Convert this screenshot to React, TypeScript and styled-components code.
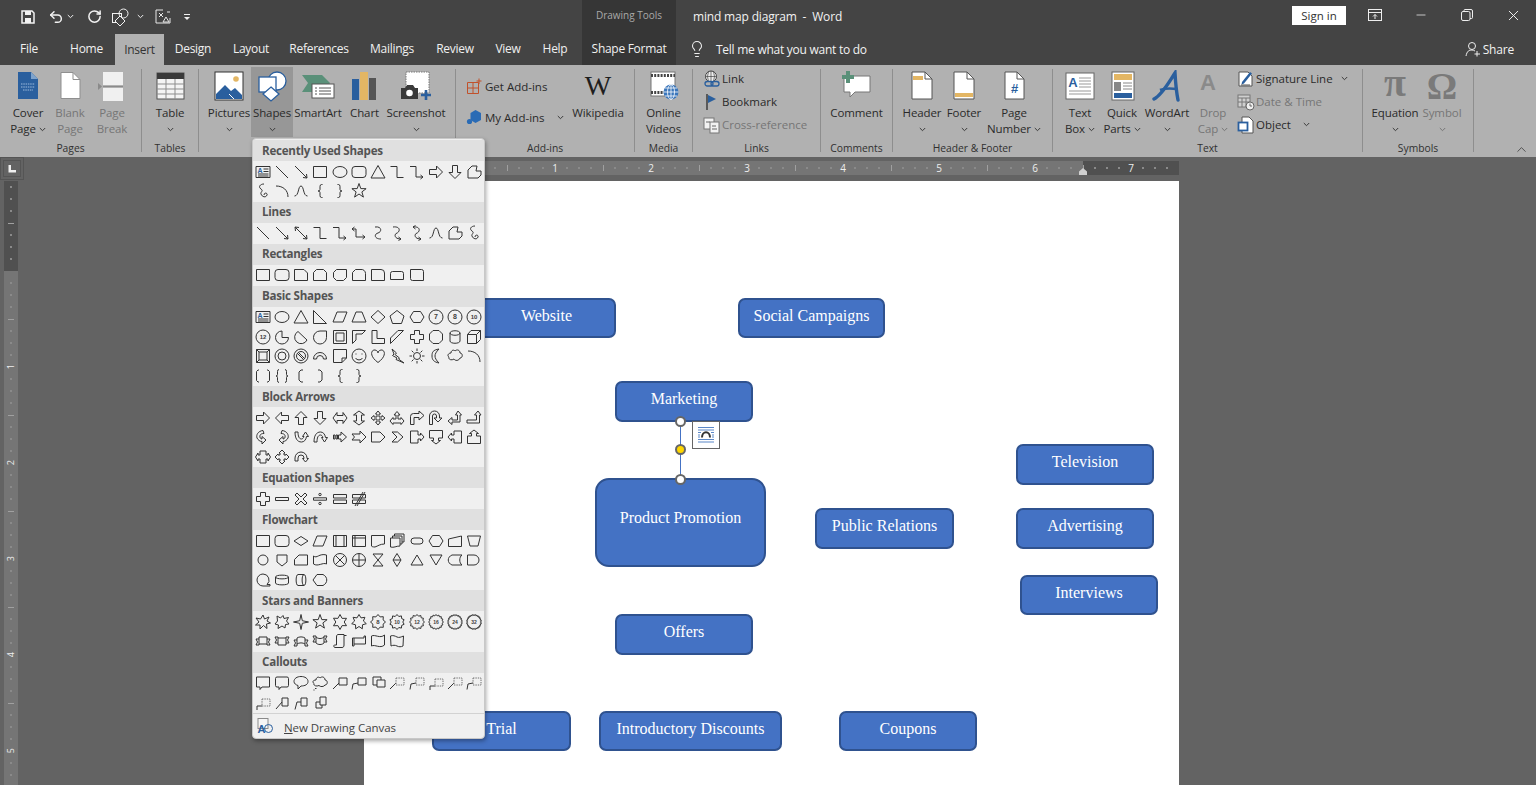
import React from 'react';
import styled, { createGlobalStyle } from 'styled-components';
import { ChevronUp, Lightbulb, Minus, RotateCw, Undo2, X } from 'lucide-react';

const UI = `"Open Sans", "Liberation Sans", sans-serif`;
const SERIF = `"Liberation Serif", serif`;

const Global = createGlobalStyle`
  html, body { margin: 0; padding: 0; background: #636363; overflow: hidden; }
  * { box-sizing: border-box; }
`;

const Root = styled.div`
  position: relative; width: 1536px; height: 785px; overflow: hidden;
  font-family: ${UI}; font-size: 11.5px; color: #262626; background: #636363;
`;

/* ---------- title bar ---------- */
const Header = styled.header`display: flex; height: 65px; background: #444444; color: #f2f2f2;`;
const HeaderLeft = styled.div`width: 582px; display: flex; flex-direction: column;`;
const Qat = styled.div`height: 33px; display: flex; align-items: center; padding-left: 20px;`;
const QatSlot = styled.span<{ $w: number }>`width: ${p => p.$w}px; display: flex; justify-content: center; align-items: center; flex: none;`;
const Tabs = styled.nav`height: 32px; display: flex; align-items: flex-end;`;
const Tab = styled.div<{ $w: number; $active?: boolean }>`
  width: ${p => p.$w}px; height: ${p => (p.$active ? 31 : 32)}px; display: flex; align-items: center; justify-content: center;
  font-size: 12px; letter-spacing: -0.28px; padding-bottom: ${p => (p.$active ? 0 : 1)}px;
  color: ${p => (p.$active ? '#333' : '#f0f0f0')};
  background: ${p => (p.$active ? '#b1b1b1' : 'transparent')};
`;
const Context = styled.div`width: 94px; background: #363636; display: flex; flex-direction: column;`;
const ContextTitle = styled.div`height: 33px; display: flex; align-items: center; justify-content: center; font-size: 10px; color: #a9a9a9; padding-bottom: 3px;`;
const HeaderRight = styled.div`flex: 1; display: flex; flex-direction: column;`;
const TopRow = styled.div`height: 33px; display: flex; align-items: center; padding-left: 17px;`;
const DocTitle = styled.div`font-size: 12px; color: #f2f2f2; white-space: pre; padding-bottom: 1px; letter-spacing: -0.17px;`;
const SignIn = styled.div`
  margin-left: auto; margin-right: 6px; margin-bottom: 3px; width: 54px; height: 19px; background: #fff; color: #333; font-size: 11.5px;
  display: flex; align-items: center; justify-content: center;
`;
const WinBtn = styled.div`width: 46px; height: 30px; margin-bottom: 3px; display: flex; align-items: center; justify-content: center;`;
const BottomRow = styled.div`height: 32px; display: flex; align-items: center; padding-left: 12px; padding-right: 22px;`;
const TellMe = styled.div`font-size: 12px; margin-left: 10px; letter-spacing: -0.26px; color: #f2f2f2;`;
const Share = styled.div`margin-left: auto; display: flex; align-items: center; gap: 2px; font-size: 12px; letter-spacing: -0.2px;`;

/* ---------- ribbon ---------- */
const Ribbon = styled.div`display: flex; height: 92px; background: #b1b1b1;`;
const Group = styled.section<{ $w: number }>`
  width: ${p => p.$w}px; flex: none; display: flex; flex-direction: column; padding-top: 2px;
`;
const GroupBody = styled.div<{ $pl?: number; $center?: boolean }>`
  height: 73px; display: flex; padding-left: ${p => p.$pl ?? 0}px;
  justify-content: ${p => (p.$center ? 'center' : 'flex-start')};
`;
const GroupLabel = styled.div`height: 16px; line-height: 16px; text-align: center; font-size: 10.3px; color: #303030; white-space: nowrap;`;
const Sep = styled.div`width: 1px; flex: none; margin: 4px 0 5px; background: #8e8e8e;`;
const Big = styled.div<{ $w: number; $hot?: boolean; $off?: boolean }>`
  width: ${p => p.$w}px; height: 70px; flex: none; display: flex; flex-direction: column; align-items: center;
  background: ${p => (p.$hot ? '#979797' : 'transparent')};
  color: ${p => (p.$off ? '#767676' : '#2a2a2a')};
`;
const BigIcon = styled.div`height: 38px; width: 100%; display: flex; align-items: center; justify-content: center; flex: none;`;
const BigLine = styled.div`height: 16px; line-height: 16px; white-space: nowrap; display: flex; align-items: center; gap: 3px; letter-spacing: -0.1px;`;
const Column = styled.div<{ $w: number; $top: number; $h: number }>`
  width: ${p => p.$w}px; padding-top: ${p => p.$top}px; display: flex; flex-direction: column; flex: none;
  & > div { height: ${p => p.$h}px; }
`;
const Small = styled.div<{ $off?: boolean }>`
  display: flex; align-items: center; white-space: nowrap; letter-spacing: 0;
  color: ${p => (p.$off ? '#767676' : '#2a2a2a')};
`;
const SmallIcon = styled.span`width: 19px; flex: none; display: flex; justify-content: center; margin-right: 1px;`;
const Spacer = styled.span<{ $w: number }>`display: inline-block; width: ${p => p.$w}px; flex: none;`;
const Collapse = styled.div`flex: 1; display: flex; align-items: flex-end; justify-content: flex-end; padding: 0 7px 0 0;`;
const BigGlyph = styled.span<{ $size: number; $color: string; $bold?: boolean; $lift?: number }>`
  font-family: ${SERIF}; font-size: ${p => p.$size}px; line-height: 1; color: ${p => p.$color};
  font-weight: ${p => (p.$bold ? 'bold' : 'normal')}; margin-bottom: ${p => p.$lift ?? 0}px;
`;

/* ---------- workspace ---------- */
const Workspace = styled.main`display: flex; height: 628px; background: #636363;`;
const LeftPane = styled.div`width: 364px; flex: none; display: flex; flex-direction: column;`;
const TabSelector = styled.div`
  width: 24px; height: 23px; border: 1px solid #555; padding: 2px; flex: none; margin-bottom: 1px;
  & > div { width: 100%; height: 100%; border: 1px solid #555; display: flex; align-items: center; justify-content: center; }
`;
const VRuler = styled.div`
  width: 14px; margin-left: 4px; flex: 1; overflow: hidden;
  background: linear-gradient(to bottom, #505050 90px, #757575 90px);
`;
const VCell = styled.div`height: 12px; display: flex; align-items: center; justify-content: center;`;
const VNum = styled.span`font-size: 9px; line-height: 10px; color: #eee; writing-mode: vertical-rl; transform: rotate(180deg);`;
const Dot = styled.i`display: block; width: 2px; height: 2px; background: #8a8a8a;`;
const VDash = styled.i`display: block; width: 6px; height: 1px; background: #a0a0a0;`;
const HDash = styled.i`display: block; width: 1px; height: 6px; background: #a0a0a0;`;
const PageCol = styled.div`width: 815px; flex: none; display: flex; flex-direction: column; padding-top: 4px;`;
const HRuler = styled.div`
  position: relative; height: 14px; flex: none; display: flex; padding-left: 5px;
  background: linear-gradient(to right, #505050 95px, #757575 95px, #757575 719px, #505050 719px);
`;
const HCell = styled.div`width: 12px; flex: none; display: flex; align-items: center; justify-content: center;`;
const HNum = styled.span`font-size: 10px; line-height: 14px; color: #eee;`;
const IndentMark = styled.div`
  position: absolute; left: 715px; bottom: 0; width: 8px; height: 7px; background: #d0d0d0;
  clip-path: polygon(50% 0, 100% 50%, 100% 100%, 0 100%, 0 50%);
`;
const Page = styled.div`position: relative; margin-top: 6px; flex: 1; background: #fff;`;
const Node = styled.div<{ $x: number; $y: number; $w: number; $h: number; $r?: number; $pb?: number }>`
  position: absolute; left: ${p => p.$x - 365}px; top: ${p => p.$y - 181}px; width: ${p => p.$w + 1}px; height: ${p => p.$h}px;
  background: #4472c4; border: 2px solid #2f528f; border-radius: ${p => p.$r ?? 7}px; color: #fff;
  font-family: ${SERIF}; font-size: 16px; display: flex; align-items: center; justify-content: center;
  padding-bottom: ${p => p.$pb ?? 5}px; white-space: nowrap;
`;
const Connector = styled.div`position: absolute; left: 316px; top: 240px; width: 1px; height: 58px; background: #4472c4;`;
const Handle = styled.div<{ $y: number; $yellow?: boolean }>`
  position: absolute; left: 311px; top: ${p => p.$y - 5}px; width: 11px; height: 11px; border-radius: 50%;
  border: 2px solid #666; background: ${p => (p.$yellow ? '#ffd700' : '#fff')};
`;
const LayoutBtn = styled.div`
  position: absolute; left: 328px; top: 240px; width: 28px; height: 28px; background: #fff; border: 1px solid #666;
  display: flex; align-items: center; justify-content: center;
`;

/* ---------- shapes gallery ---------- */
const Menu = styled.div`
  position: absolute; left: 252px; top: 138px; width: 233px; height: 601px; background: #f0f0f0;
  border: 1px solid #c8c8c8; border-radius: 4px; padding-top: 1px; box-shadow: 1px 2px 4px rgba(0,0,0,.35); overflow: hidden;
`;
const MenuHead = styled.div`
  height: 21px; background: #e0e0e0; padding: 0 0 1px 9px; display: flex; align-items: center;
  font-size: 11.6px; font-weight: 700; color: #545454; white-space: nowrap; letter-spacing: -0.25px;
`;
const GlyphGrid = styled.div<{ $rows: number }>`
  display: grid; grid-template-columns: repeat(12, 19.25px); grid-auto-rows: 19.5px; padding-top: 1px;
  height: ${p => p.$rows * 19.5 + 1.5}px; align-items: center; justify-items: center;
`;
const MenuFoot = styled.div`
  height: 27px; border-top: 1px solid #d2d2d2; display: flex; align-items: center; padding-left: 2px; color: #444; font-size: 11.5px; letter-spacing: -0.05px;
  & u { text-underline-offset: 1px; }
`;
const FootIcon = styled.span`width: 29px; display: flex; justify-content: flex-start;`;

/* ---------- shape glyph data ---------- */
const c = (x: number, y: number, r: number) => `M${x} ${y - r}A${r} ${r} 0 1 0 ${x} ${y + r}A${r} ${r} 0 1 0 ${x} ${y - r}Z`;
const starPath = (n: number, R: number, r: number) => {
  let d = '';
  for (let i = 0; i < n * 2; i++) {
    const a = (Math.PI * i) / n - Math.PI / 2;
    const q = i % 2 ? r : R;
    d += `${i ? 'L' : 'M'}${(8 + q * Math.cos(a)).toFixed(1)} ${(8 + q * Math.sin(a)).toFixed(1)}`;
  }
  return d + 'Z';
};
const cloud = 'M4 5C4 2 7 1.5 8 3C10 1 13 2 13 5C16 5 16 10 13 10C12 13 8 13 7 11C4 13 1 11 2 9C0 8 1 5 4 5Z';
const cross = 'M5.5 1.5H10.5V5.5H14.5V10.5H10.5V14.5H5.5V10.5H1.5V5.5H5.5Z';
const rect = 'M1.5 2.5H14.5V13.5H1.5Z';
const tbox = 'M1 2.5H15V13.5H1ZM8.5 5H13.5M8.5 7.5H13.5M3 10H13.5M3 12H13.5';

type G = { d: string; dash?: string; label?: string; lx?: number; ly?: number; lc?: string; ls?: number };
const g = (d: string, label?: string, ls = 6): G => ({ d, label, ls });
const S: Record<string, G> = {
  tb: { d: tbox, label: 'A', lx: 5, ly: 8.5, lc: '#2a5f9e', ls: 7 },
  line: g('M2 2L14 14'), arrow: g('M2 2L14 14M14 14L13.5 10M14 14L10 13.5'),
  darrow: g('M2 2L14 14M2 2L2.5 6M2 2L6 2.5M14 14L13.5 10M14 14L10 13.5'),
  rect: g(rect), oval: g('M1 8a7 5.5 0 1 0 14 0a7 5.5 0 1 0 -14 0'),
  rrect: g('M4 2.5H12A3 3 0 0 1 15 5.5V10.5A3 3 0 0 1 12 13.5H4A3 3 0 0 1 1 10.5V5.5A3 3 0 0 1 4 2.5Z'),
  tri: g('M8 1.5L15 14H1Z'), elbow: g('M1.5 2.5H8V13.5H14.5'),
  elbowA: g('M1 2.5H7V13H14M14 13L11.5 11M14 13L11.5 15'),
  elbowD: g('M1 4H5V12H14M14 12L11.5 10M14 12L11.5 14M1 4L3.5 2M1 4L3.5 6'),
  cc: g('M5 2C12 1 12 7 8 8C4 9 4 14 11 14'), cca: g('M4 2C12 1 11 7 8 8C5 9 5 14 12 14M12 14L9.5 12M12 14L9.5 15.5'),
  ccd: g('M4 2C12 1 11 7 8 8C5 9 5 14 12 14M12 14L9.5 12M12 14L9.5 15.5M4 2L6.5 .5M4 2L6.5 4'),
  arc: g('M2 3C9 3 14 7 14 14'), scurve: g('M1.5 13C6 13 5 3 8 3C11 3 10 13 14.5 13'),
  free: g('M2 14V6L6 2H11L10 7H15V11L12 14Z'), scrib: g('M9 1C5 1 3 4 6 6C9 8 5 9 6 11C7 14 11 15 12 12C13 10 9 9 9 12'),
  lb: g('M10.5 1.5H9.5Q8 1.5 8 3.5V6.5Q8 8 6 8Q8 8 8 9.5V12.5Q8 14.5 9.5 14.5H10.5'),
  rb: g('M5.5 1.5H6.5Q8 1.5 8 3.5V6.5Q8 8 10 8Q8 8 8 9.5V12.5Q8 14.5 6.5 14.5H5.5'),
  star5: g(starPath(5, 7.5, 3)),
  arR: g('M1.5 5.5H8.5V2L14.5 8L8.5 14V10.5H1.5Z'), arL: g('M14.5 5.5H7.5V2L1.5 8L7.5 14V10.5H14.5Z'),
  arU: g('M5.5 14.5V7.5H2L8 1.5L14 7.5H10.5V14.5Z'), arD: g('M5.5 1.5V8.5H2L8 14.5L14 8.5H10.5V1.5Z'),
  snip1: g('M1.5 2.5H11L14.5 6V13.5H1.5Z'), snip2: g('M4.5 2.5H11.5L14.5 5.5V13.5H1.5V5.5Z'),
  snipd: g('M4.5 2.5H14.5V10.5L11.5 13.5H4.5L1.5 10.5V5.5Z'), snipr: g('M4.5 2.5H10A4 4 0 0 1 14.5 6.5V13.5H1.5V5.5Z'),
  rnd1: g('M1.5 2.5H11A3.5 3.5 0 0 1 14.5 6V13.5H1.5Z'), rnd2: g('M3.5 4.5H12.5A2 2 0 0 1 14.5 6.5V12.5H1.5V6.5A2 2 0 0 1 3.5 4.5Z'),
  rndd: g('M1.5 2.5H12.5A2 2 0 0 1 14.5 4.5V13.5H3.5A2 2 0 0 1 1.5 11.5Z'),
  rtri: g('M1.5 1.5L14.5 14.5H1.5Z'), para: g('M5 3H15L11 13H1Z'), trap: g('M5 3H11L15 13H1Z'), diam: g('M8 1.5L15 8L8 14.5L1 8Z'),
  pent: g('M8 1.5L15 7L12.5 14.5H3.5L1 7Z'), hex: g('M4.5 2.5H11.5L15 8L11.5 13.5H4.5L1 8Z'),
  h7: g(c(8, 8, 7), '7', 7), h8: g(c(8, 8, 7), '8', 7), h10: g(c(8, 8, 7), '10', 6), h12: g(c(8, 8, 7), '12', 6),
  pie: g('M8 2A6.5 6.5 0 1 0 14.5 8.5H8Z'), chord: g('M5 2.5A6.5 6.5 0 1 0 14 11Z'), tear: g('M8 2H14.5V8.5A6.5 6.5 0 1 1 8 2Z'),
  frame: g('M1.5 1.5H14.5V14.5H1.5ZM4 4V12H12V4Z'), half: g('M1.5 1.5H14.5L11 5H5V11L1.5 14.5Z'), lsh: g('M2 1.5H7V9.5H14.5V14.5H2Z'),
  stripe: g('M1.5 9L9 1.5H14.5L1.5 14.5Z'), cross: g(cross), octa: g('M5 1.5H11L14.5 5V11L11 14.5H5L1.5 11V5Z'),
  can: g('M3 4C3 1 13 1 13 4V12C13 15 3 15 3 12ZM3 4C3 7 13 7 13 4'),
  cube: g('M1.5 5.5H10.5V14.5H1.5ZM1.5 5.5L5 1.5H14.5L10.5 5.5M14.5 1.5V10.5L10.5 14.5'),
  bevel: g('M1.5 1.5H14.5V14.5H1.5ZM4 4H12V12H4ZM1.5 1.5L4 4M14.5 1.5L12 4M1.5 14.5L4 12M14.5 14.5L12 12'),
  donut: g(c(8, 8, 7) + c(8, 8, 4)), nosym: g(c(8, 8, 7) + c(8, 8, 4.5) + 'M4.5 5.5L10.5 11.5M5.5 4.5L11.5 10.5'),
  barc: g('M1.5 11A6.5 6.5 0 0 1 14.5 11H11.5A3.5 3.5 0 0 0 4.5 11Z'), fold: g('M1.5 1.5H14.5V10L10 14.5H1.5ZM14.5 10H10V14.5'),
  smile: g(c(8, 8, 7) + 'M5 5.5V6.5M11 5.5V6.5M4.5 10C6 12.5 10 12.5 11.5 10'),
  heart: g('M8 14.5C-1 8 1 1.5 5 2C7 2.2 8 4 8 5C8 4 9 2.2 11 2C15 1.5 17 8 8 14.5Z'),
  bolt: g('M3 1L7.5 5L6 6.5L10.5 10L9.5 11L15 15L7 11.5L8 10L3.5 7.5L5 6Z'),
  sun: g(c(8, 8, 3.5) + 'M8 .5V3M8 13V15.5M.5 8H3M13 8H15.5M2.7 2.7L4.5 4.5M11.5 11.5L13.3 13.3M2.7 13.3L4.5 11.5M11.5 4.5L13.3 2.7'),
  moon: g('M11 1C5 2 4 4 4 8C4 12 6 14 11 15C8 12 7 10 7 8C7 6 8 4 11 1Z'), cloud: g(cloud),
  dbk: g('M4 2H3L1.5 3.5V12.5L3 14H4M12 2H13L14.5 3.5V12.5L13 14H12'),
  dbr: g('M5 1.5Q3.5 1.5 3.5 3.5V6.5Q3.5 8 2 8Q3.5 8 3.5 9.5V12.5Q3.5 14.5 5 14.5M11 1.5Q12.5 1.5 12.5 3.5V6.5Q12.5 8 14 8Q12.5 8 12.5 9.5V12.5Q12.5 14.5 11 14.5'),
  lk: g('M10 2H8L6 4V12L8 14H10'), rk: g('M6 2H8L10 4V12L8 14H6'),
  aLR: g('M5 5.5H11V2.5L15 8L11 13.5V10.5H5V13.5L1 8L5 2.5Z'), aUD: g('M5.5 5V11H2.5L8 15L13.5 11H10.5V5H13.5L8 1L2.5 5Z'),
  aQ: g('M8 1L10.5 4H9V7H12V5.5L15 8L12 10.5V9H9V12H10.5L8 15L5.5 12H7V9H4V10.5L1 8L4 5.5V7H7V4H5.5Z'),
  aLRU: g('M8 1.5L11 5H9V9H12V7.5L15 11L12 14.5V13H4V14.5L1 11L4 7.5V9H7V5H5Z'),
  aBent: g('M1.5 14.5V6.5Q1.5 3.5 4.5 3.5H10V1L15 5.5L10 10V7.5H5V14.5Z'),
  aUt: g('M1.5 14.5V6A5 5 0 0 1 11.5 6V8H14L10 12L6 8H8.5V6A2 2 0 0 0 4.5 6V14.5Z'),
  aLU: g('M11 1L14.5 5H13V12H5V14.5L1 11L5 7.5V10H10.5V5H8.5Z'), aBU: g('M1 10H10.5V5H8.5L12 1L15 5H13.5V13H1Z'),
  cR: g('M8 1.5C3 2 1 6 2 9C3 11 5 12.5 7 12.5V15L11 11L7 7.5V10C5.5 10 4.5 8.5 5 6.5C5.5 5 7 4.5 9 4.5Z'),
  cL: g('M8 1.5C13 2 15 6 14 9C13 11 11 12.5 9 12.5V15L5 11L9 7.5V10C10.5 10 11.5 8.5 11 6.5C10.5 5 9 4.5 7 4.5Z'),
  cU: g('M2 3C2 9 4 13 8.5 13C11 13 13 11 13.5 7.5H15.5L12.5 3L9.5 7.5H11C10.5 9 9.5 10 8.5 10C6 10 5 7 5 3Z'),
  cD: g('M2 13C2 7 4 3 8.5 3C11 3 13 5 13.5 8.5H15.5L12.5 13L9.5 8.5H11C10.5 7 9.5 6 8.5 6C6 6 5 9 5 13Z'),
  strip: g('M1.5 6H3V10H1.5ZM4 6H5.5V10H4ZM6.5 6H9V3L14.5 8L9 13V10H6.5Z'), notch: g('M1 5H9V2L15 8L9 14V11H1L3.5 8Z'),
  penta: g('M1.5 3H10L15 8L10 13H1.5Z'), chev: g('M3 3H8.5L14 8L8.5 13H3L8 8Z'),
  callR: g('M1.5 2H9V6H11.5V4L15 8L11.5 12V10H9V14H1.5Z'), callD: g('M1.5 1.5H14.5V9H10.5V11.5H12.5L8 15L3.5 11.5H5.5V9H1.5Z'),
  callL: g('M14.5 2H7V6H4.5V4L1 8L4.5 12V10H7V14H14.5Z'), callU: g('M1.5 14.5H14.5V7H10.5V4.5H12.5L8 1L3.5 4.5H5.5V7H1.5Z'),
  callLR: g('M5 2H11V6H13V4L15.5 8L13 12V10H11V14H5V10H3V12L.5 8L3 4V6H5Z'),
  callQ: g('M8 1L11 4H10V6H12V5L15 8L12 11V10H10V12H11L8 15L5 12H6V10H4V11L1 8L4 5V6H6V4H5Z'),
  circ: g('M2 12V9A6 6 0 0 1 14 9V9.5H15.5L12.5 13L9.5 9.5H11V9A3 3 0 0 0 5 9V12Z'),
  minus: g('M1.5 6.5H14.5V9.5H1.5Z'), times: g('M4 2L8 6L12 2L14 4L10 8L14 12L12 14L8 10L4 14L2 12L6 8L2 4Z'),
  div: g('M1.5 6.8H14.5V9.2H1.5Z' + c(8, 3.5, 1.2) + c(8, 12.5, 1.2)), eq: g('M1.5 3.5H14.5V7H1.5ZM1.5 9H14.5V12.5H1.5Z'),
  neq: g('M1.5 3.5H14.5V7H1.5ZM1.5 9H14.5V12.5H1.5ZM4 15L12 1M6 15L14 1'),
  fdec: g('M1 8L8 3.5L15 8L8 12.5Z'), pre: g(rect + 'M4 2.5V13.5M12 2.5V13.5'), intern: g(rect + 'M1.5 5H14.5M4 2.5V13.5'),
  doc: g('M1.5 2.5H14.5V11C10 11 8 13 5 14C3 14 1.5 13.5 1.5 13Z'), multi: g('M1.5 5H11V13C7 13 5 15 1.5 14ZM3.5 5V3H13V11H11M5.5 3V1H15V9H13'),
  term: g('M5 5H11A3 3 0 0 1 11 11H5A3 3 0 0 1 5 5Z'), manual: g('M1.5 6L14.5 3V13.5H1.5Z'), mop: g('M1.5 3H14.5L12 13H4Z'),
  conn: g(c(8, 8, 5)), off: g('M3 3H13V10L8 14L3 10Z'), card: g('M6 3H14.5V13H1.5V7.5Z'), tape: g('M1.5 4C5 7 7 1 14.5 3V12C11 10 6 15 1.5 12Z'),
  sum: g(c(8, 8, 6.5) + 'M3.4 3.4L12.6 12.6M12.6 3.4L3.4 12.6'), or: g(c(8, 8, 6.5) + 'M8 1.5V14.5M1.5 8H14.5'),
  coll: g('M3 2H13L3 14H13Z'), sort: g('M8 1.5L12 8L8 14.5L4 8ZM4 8H12'), ext: g('M8 3L14 13H2Z'), merge: g('M2 3H14L8 13Z'),
  stored: g('M5 3H15C12 5 12 11 15 13H5C0 11 0 5 5 3Z'), delay: g('M1.5 3H8A5 5 0 0 1 8 13H1.5Z'),
  seq: g('M8 2A6 6 0 1 0 8 14H15V12.5H12A6 6 0 0 0 8 2Z'), mag: g('M1.5 5C1.5 2.5 14.5 2.5 14.5 5V11C14.5 13.5 1.5 13.5 1.5 11ZM1.5 5C1.5 7.5 14.5 7.5 14.5 5'),
  direct: g('M5 2.5H11C13.5 2.5 13.5 13.5 11 13.5H5C2.5 13.5 2.5 2.5 5 2.5ZM11 2.5C8.5 2.5 8.5 13.5 11 13.5'),
  disp: g('M5 2.5H11C16 5 16 11 11 13.5H5L1 8Z'),
  ex1: g('M8 1L9.5 5L14 3L12 7L15.5 9L11.5 10L12 14.5L8.5 11.5L5 15L5 11L.5 11L4 8L1 4L5.5 5Z'),
  ex2: g('M3 2L6.5 4L9 1.5L10 4.5L14.5 3.5L12.5 7L15 10L11.5 10.5L11 14L8 12L4 14.5L4.5 11L1 10L3.5 7Z'),
  s4: g(starPath(4, 7.5, 1.8)), s6: g(starPath(6, 7.5, 4.2)), s7: g(starPath(7, 7.5, 4.5)),
  s8: g(starPath(8, 7.5, 5.5), '8', 6), s10: g(starPath(10, 7.5, 5.8), '10', 5), s12: g(starPath(12, 7.5, 6), '12', 5),
  s16: g(starPath(16, 7.5, 6.2), '16', 5), s24: g(starPath(24, 7.5, 6.4), '24', 5), s32: g(starPath(32, 7.5, 6.5), '32', 5),
  rD: g('M4 4H12V11H4ZM4 6H1L2.5 9L1 12H4V11M12 6H15L13.5 9L15 12H12V11'),
  rU: g('M4 5H12V12H4ZM4 10H1L2.5 7L1 4H4V5M12 10H15L13.5 7L15 4H12V5'),
  crD: g('M4 5C6 3.5 10 3.5 12 5V11C10 9.5 6 9.5 4 11ZM4 7H1L2.5 10L1 13H4V11M12 7H15L13.5 10L15 13H12V11'),
  crU: g('M4 10C6 12 10 12 12 10V4C10 6 6 6 4 4ZM4 9H1L2.5 6L1 3H4V4M12 9H15L13.5 6L15 3H12V4'),
  vs: g('M3 14.5H10C11.5 14.5 12 13.5 12 12V2.5H14.5M12 2.5V1.5H6C5 1.5 4.5 2.5 4.5 4V12H2.5C1.5 12 1.5 14.5 3 14.5'),
  hs: g('M1.5 5H13V3H14.5V11H3V13H1.5ZM3 11V5'), wave: g('M1.5 3C5 1 10 6 14.5 2V12C10 16 5 11 1.5 13Z'),
  dw: g('M1.5 3C4 2 6 3 8 4C10 5 12 4 14.5 3L14 13C12 14 10 14 8 13C6 12 4 12 2 13Z'),
  cRect: g('M1.5 2H14.5V12H7L5 14.5V12H1.5Z'),
  cRR: g('M3 2H13A1.5 1.5 0 0 1 14.5 3.5V10.5A1.5 1.5 0 0 1 13 12H7L5 14.5V12H3A1.5 1.5 0 0 1 1.5 10.5V3.5A1.5 1.5 0 0 1 3 2Z'),
  cOv: g('M8 1.5C12 1.5 15 3.5 15 6.5C15 9.5 12 11 8 11L5 14V10.5C3 10 1 8.5 1 6.5C1 3.5 4 1.5 8 1.5Z'),
  cCl: g('M4 5C4 2 7 1.5 8 3C10 1 13 2 13 5C16 5 16 10 13 10C12 12 8 12 7 10.5C4 12 1 10 2 8.5C0 7 1 5 4 5ZM3 13.5H4.5M1.5 15H2.5'),
  l1: g('M7 3H15V10H7ZM1 14L7 8'), l2: g('M7 3H15V10H7ZM1 14.5L2 9L7 8'), l3: g('M7 5H15V12H7ZM3 2H11V5M7 10H3V2'),
  d1: { d: 'M1 14L7 8', dash: 'M7 3H15V10H7Z' }, d2: { d: 'M1 14.5L2 9L7 8', dash: 'M7 3H15V10H7Z' },
  d3: { d: 'M7 11H2V15', dash: 'M7 4H15V11H7Z' },
  b1: g('M8 3H14V11H8ZM2 14L8 7'), b2: g('M8 3H14V11H8ZM2 14.5L4 7H8'), b3: g('M8 2H14V10H8ZM8 7H4V13H10V10'),
};
const rows = (s: string) => s.split(' ');
const Sections: [string, string[], number][] = [
  ['Recently Used Shapes', rows('tb line arrow rect oval rrect tri elbow elbowA arR arD free scrib arc scurve lb rb star5'), 2],
  ['Lines', rows('line arrow darrow elbow elbowA elbowD cc cca ccd scurve free scrib'), 1],
  ['Rectangles', rows('rect rrect snip1 snip2 snipd snipr rnd1 rnd2 rndd'), 1],
  ['Basic Shapes', rows('tb oval tri rtri para trap diam pent hex h7 h8 h10 h12 pie chord tear frame half lsh stripe cross octa can cube bevel donut nosym barc fold smile heart bolt sun moon cloud arc dbk dbr lk rk lb rb'), 4],
  ['Block Arrows', rows('arR arL arU arD aLR aUD aQ aLRU aBent aUt aLU aBU cR cL cU cD strip notch penta chev callR callD callL callU callLR callQ circ'), 3],
  ['Equation Shapes', rows('cross minus times div eq neq'), 1],
  ['Flowchart', rows('rect rrect fdec para pre intern doc multi term hex manual mop conn off card tape sum or coll sort ext merge stored delay seq mag direct disp'), 3],
  ['Stars and Banners', rows('ex1 ex2 s4 star5 s6 s7 s8 s10 s12 s16 s24 s32 rD rU crD crU vs hs wave dw'), 2],
  ['Callouts', rows('cRect cRR cOv cCl l1 l2 l3 d1 d2 d3 d1 d2 d3 b1 b2 b3'), 2],
];

const Glyph = ({ k }: { k: string }) => {
  const s = S[k];
  return (
    <svg width="16" height="16" viewBox="0 0 16 16" fill="none" stroke="#333" strokeWidth="1">
      <path d={s.d} />
      {s.dash && <path d={s.dash} strokeDasharray="1.4 1" stroke="#707070" />}
      {s.label && (
        <text x={s.lx ?? 8} y={s.ly ?? 10.2} textAnchor="middle" fontSize={s.ls} fontFamily="Liberation Sans" fontWeight="bold" stroke="none" fill={s.lc ?? '#404040'}>{s.label}</text>
      )}
    </svg>
  );
};

/* ---------- ribbon icons ---------- */
const Chev = ({ color = '#3a3a3a' }: { color?: string }) => (
  <svg width="7" height="5" viewBox="0 0 7 5" fill="none" stroke={color} strokeWidth="1"><path d="M.8 1L3.5 3.7L6.2 1" /></svg>
);
type IP = { w?: number; h?: number; children: React.ReactNode };
const I = ({ w = 32, h = 32, children }: IP) => <svg width={w} height={h} viewBox={`0 0 ${w} ${h}`} fill="none">{children}</svg>;

const pageShape = (x: number, y: number, w: number, h: number) => `M${x} ${y}H${x + w - 7}L${x + w} ${y + 7}V${y + h}H${x}Z`;
const CoverIcon = () => <I><path d={pageShape(6, 2, 20, 27)} fill="#2a5f9e" /><path d="M19 2L26 9H19Z" fill="#7ea3cc" /><path d="M9 14H23M9 17H23M11 20H21" stroke="#9dbbdc" strokeWidth="1" strokeDasharray="1.5 .8" /></I>;
const BlankIcon = () => <I><path d={pageShape(7, 2.5, 19, 26)} fill="#fff" stroke="#8f8f8f" /><path d="M19 2.5V9.5H26" stroke="#8f8f8f" /></I>;
const BreakIcon = () => <I><rect x="7" y="2" width="20" height="13" fill="#f0f0f0" /><rect x="7" y="18" width="20" height="13" fill="#f0f0f0" /><path d="M2 13L6 16.5L2 20Z" fill="#8a8a8a" /><path d="M7 16.5H27" stroke="#8a8a8a" /></I>;
const TableIcon = () => <I><rect x="3" y="3" width="27" height="26" fill="#f4f4f4" stroke="#555" /><rect x="3" y="3" width="27" height="6" fill="#3a3a3a" /><path d="M3 14H30M3 19H30M3 24H30M12 9V29M21 9V29" stroke="#8d8d8d" /></I>;
const PicturesIcon = () => <I><rect x="2" y="2" width="28" height="28" fill="#fff" stroke="#333" strokeWidth="1" /><path d="M3 29V24L12 15L18 21L22 18L29 25V29Z" fill="#2a5f9e" /><path d="M16 24L21 29" stroke="#fff" /><circle cx="23" cy="9" r="2.8" fill="#e3b664" /></I>;
const ShapesIcon = () => <I><circle cx="21" cy="11" r="9" fill="#fff" stroke="#2a5f9e" strokeWidth="1.3" /><rect x="3" y="7" width="17" height="15" fill="#fff" stroke="#2a5f9e" strokeWidth="1.3" /><path d="M15 17L23 24L15 31L7 24Z" fill="#fff" stroke="#2a5f9e" strokeWidth="1.3" /></I>;
const SmartArtIcon = () => <I w={36}><path d="M2 5H22L30 13L24 22H2L8 13Z" fill="#5a9079" /><rect x="12" y="14" width="22" height="14" fill="#fff" stroke="#555" /><path d="M15 18H17M19 18H31M15 21H17M19 21H31M15 24H17M19 24H31" stroke="#555" /></I>;
const ChartIcon = () => <I><rect x="3" y="9" width="7" height="21" fill="#2a5f9e" /><rect x="11" y="2" width="8" height="28" fill="#e3b664" /><rect x="20" y="8" width="7" height="22" fill="#555" /></I>;
const ScreenshotIcon = () => <I w={34}><rect x="7" y="2" width="23" height="21" fill="#fff" stroke="#777" strokeDasharray="1.5 1" /><path d="M2 18H6L8 15H14L16 18H19V29H2Z" fill="#3a3a3a" /><circle cx="10.5" cy="23" r="3.3" fill="#fff" /><path d="M27 20V30M22 25H32" stroke="#2a5f9e" strokeWidth="2.6" /></I>;
const GetAddIcon = () => <I w={17} h={17}><path d="M1.5 4.5H12.5V15.5H1.5ZM7 4.5V15.5M1.5 10H12.5" stroke="#c1512b" /><path d="M13 .5V6M10.5 3H15.5" stroke="#c1512b" /></I>;
const MyAddIcon = () => <I w={17} h={17}><path d="M9.5 1L15 4V11L9.5 14L4.5 11V4Z" fill="#2a6bb5" /><circle cx="3.5" cy="12.5" r="2.6" fill="#2a6bb5" /></I>;
const VideosIcon = () => <I><rect x="3" y="2" width="24" height="24" fill="#fff" stroke="#777" /><path d="M3 5.5H27M3 22.5H27" stroke="#444" strokeWidth="3" strokeDasharray="2 1.2" /><circle cx="23" cy="22" r="7.5" fill="#3a76bb" /><path d="M15.5 22H30.5M23 14.5V29.5M17 18H29M17 26H29" stroke="#fff" strokeWidth=".8" /><ellipse cx="23" cy="22" rx="3.5" ry="7.5" stroke="#fff" strokeWidth=".8" /></I>;
const LinkIcon = () => <I w={18} h={18}><circle cx="8" cy="6.5" r="5.5" fill="#eee" stroke="#444" /><path d="M2.5 6.5H13.5M8 1V12M5.5 1.5Q3.5 6.5 5.5 11.5M10.5 1.5Q12.5 6.5 10.5 11.5" stroke="#444" strokeWidth=".7" /><rect x="2" y="11.5" width="8" height="4.5" rx="2.2" fill="#b1b1b1" stroke="#2a5f9e" strokeWidth="1.3" /><rect x="8" y="11.5" width="8" height="4.5" rx="2.2" stroke="#2a5f9e" strokeWidth="1.3" /></I>;
const BookmarkIcon = () => <I w={16} h={18}><path d="M3 1V17" stroke="#444" strokeWidth="1.6" /><path d="M4 2L12 6L4 10Z" fill="#2a5f9e" /></I>;
const CrossRefIcon = () => <I w={18} h={18}><rect x="1" y="2" width="10" height="11" fill="#f2f2f2" stroke="#777" /><rect x="7" y="6" width="9" height="11" fill="#f2f2f2" stroke="#777" /><path d="M3 6H7M9 10H13M9 13H14" stroke="#666" /></I>;
const CommentIcon = () => <I w={32}><path d="M3 6H29V22H14L9 27V22H3Z" fill="#fff" stroke="#777" /><path d="M7 1V13M1 7H13" stroke="#5a9079" strokeWidth="4" /></I>;
const HFIcon = ({ pos }: { pos: 'top' | 'bottom' }) => <I><path d={pageShape(6, 2, 20, 27)} fill="#fff" stroke="#555" /><path d="M19 2V9H26" stroke="#555" /><rect x="7" y={pos === 'top' ? 6 : 23} width={pos === 'top' ? 10 : 18} height="4" fill="#e3b664" /></I>;
const PageNumIcon = () => <I><path d={pageShape(7, 2, 19, 27)} fill="#fff" stroke="#555" /><path d="M19 2V9H26" stroke="#555" /><text x="16.5" y="23" textAnchor="middle" fontSize="13" fontWeight="bold" fontFamily="Liberation Sans" fill="#2a5f9e">#</text></I>;
const TextBoxIcon = () => <I><rect x="2" y="3" width="28" height="26" fill="#fff" stroke="#666" /><text x="9" y="17" textAnchor="middle" fontSize="13" fontWeight="bold" fontFamily="Liberation Sans" fill="#2a5f9e">A</text><path d="M15 8H27M15 11H27M15 14H27M15 17H27M5 21H27M5 24H27" stroke="#999" /></I>;
const QuickIcon = () => <I><rect x="6" y="2" width="22" height="28" fill="#fff" stroke="#666" /><rect x="8" y="4" width="18" height="6" fill="#e3b664" /><rect x="8" y="12" width="7" height="9" fill="#888" /><path d="M17 13H26M17 16H26M17 19H26" stroke="#888" /><rect x="8" y="23" width="18" height="5" fill="#2a5f9e" /></I>;
const WordArtIcon = () => <I w={30} h={32}><path d="M2 29C10 25 17 12 23 3C23.5 12 24 20 26 30" stroke="#2a5f9e" strokeWidth="3.4" strokeLinecap="round" /><path d="M8 20C13 18 18 18 25 19" stroke="#2a5f9e" strokeWidth="2.6" /></I>;
const DropCapIcon = () => <I><text x="11" y="20" textAnchor="middle" fontSize="22" fontWeight="bold" fontFamily="Liberation Sans" fill="#8a8a8a">A</text></I>;
const SigIcon = () => <I w={18} h={18}><path d="M2 2H11L15 6V16H2Z" fill="#fff" stroke="#555" /><path d="M5 12L13 2L15 3.5L7 13.5L4.5 14.5Z" fill="#2a5f9e" /><path d="M4 15H13" stroke="#555" /></I>;
const DateIcon = () => <I w={18} h={18}><rect x="1" y="2" width="12" height="12" fill="#cfcfcf" stroke="#777" /><path d="M1 5H13M5 5V14M9 5V14M1 9H13" stroke="#777" /><circle cx="13" cy="13" r="4" fill="#eee" stroke="#666" /><path d="M13 10.5V13H15" stroke="#666" /></I>;
const ObjectIcon = () => <I w={18} h={18}><path d="M5 1H12L16 5V17H5Z" fill="#fff" stroke="#555" /><rect x="1.5" y="6.5" width="9" height="8" fill="#fff" stroke="#2a5f9e" strokeWidth="1.8" /></I>;
const SaveIcon = () => <I w={16} h={16}><path d="M2 2H12L14 4V14H2Z" stroke="#f2f2f2" strokeWidth="1.5" /><rect x="5" y="2" width="6" height="4" fill="#f2f2f2" /><rect x="5" y="9" width="6" height="5" fill="#f2f2f2" /></I>;
const TouchIcon = () => <I w={20} h={20}><rect x="1.5" y="6.5" width="9" height="9" stroke="#f2f2f2" /><circle cx="12.5" cy="6.5" r="4.5" stroke="#f2f2f2" /><path d="M9 9L14 14L9 19L4 14Z" fill="#444" stroke="#f2f2f2" /></I>;
const PreviewIcon = () => <I w={18} h={18}><path d="M2 2H9M13 4H16M2 2V15H16V10" stroke="#e8e8e8" /><path d="M5 5L9 9M9 5L5 9" stroke="#e8e8e8" /><path d="M9 14L12 9L15 14Z" stroke="#e8e8e8" /></I>;
const CustomizeIcon = () => <I w={8} h={8}><path d="M1 1.5H7" stroke="#eee" /><path d="M1 4H7L4 7Z" fill="#eee" /></I>;
const RibbonOptIcon = () => <I w={16} h={14}><rect x="1.5" y="1.5" width="13" height="11" stroke="#eee" /><path d="M1.5 4.5H14.5" stroke="#eee" /><path d="M8 11V6.5M6 8.5L8 6.5L10 8.5" stroke="#eee" /></I>;
const RestoreIcon = () => <I w={14} h={14}><rect x="1.5" y="3.5" width="8.5" height="9" rx="1.5" stroke="#eee" /><path d="M4 3.5V2.5A1 1 0 0 1 5 1.5H11A1.5 1.5 0 0 1 12.5 3V9.5A1 1 0 0 1 11.5 10.5H10" stroke="#eee" /></I>;
const UserPlusIcon = () => <I w={16} h={16}><circle cx="7" cy="5" r="3.5" stroke="#eee" /><path d="M1 15C2 10 4 9 7 9C8 9 9 9.5 10 10M12 10V15.5M9.5 13H15" stroke="#eee" /></I>;
const LayoutIcon = () => <I w={18} h={18}><path d="M1 1.5H17M1 4H17M1 13.5H17M1 16H17M1 6.5H4M14 6.5H17M1 9H3M15 9H17M1 11H3M15 11H17" stroke="#5b87c7" /><path d="M5 11.5C5 4.5 13 4.5 13 11.5" stroke="#333" strokeWidth="2" /></I>;
const CanvasIcon = () => <I w={20} h={20}><rect x="3" y="1.5" width="10" height="10" fill="#f6f6f6" stroke="#8a8a8a" /><circle cx="13.5" cy="11.5" r="4" stroke="#2a5f9e" /><text x="6.5" y="16" textAnchor="middle" fontSize="11" fontWeight="bold" fontFamily="Liberation Sans" fill="#2a5f9e">A</text></I>;
const CornerTab = () => <I w={10} h={10}><path d="M1.5 1V8.5H9V6H4V1Z" fill="#f0f0f0" /></I>;

/* ---------- pieces ---------- */
const BigBtn = ({ w, icon, lines, chev, hot, off }: { w: number; icon: React.ReactNode; lines: string[]; chev?: boolean; hot?: boolean; off?: boolean }) => (
  <Big $w={w} $hot={hot} $off={off}>
    <BigIcon>{icon}</BigIcon>
    <BigLine>{lines[0]}</BigLine>
    <BigLine>{lines[1]}{chev && <Chev color={off ? '#767676' : '#3a3a3a'} />}</BigLine>
  </Big>
);
const SmallBtn = ({ icon, text, off, gap }: { icon: React.ReactNode; text: string; off?: boolean; gap?: number }) => (
  <Small $off={off}>
    <SmallIcon>{icon}</SmallIcon>{text}
    {gap !== undefined && <><Spacer $w={gap} /><Chev color={off ? '#767676' : '#3a3a3a'} /></>}
  </Small>
);

const TABS: [string, number][] = [['File', 58], ['Home', 57], ['Insert', 49], ['Design', 58], ['Layout', 58], ['References', 78], ['Mailings', 68], ['Review', 58], ['View', 48], ['Help', 46]];
const NODES = [
  { t: 'Website', x: 478, y: 298, w: 138, h: 40 }, { t: 'Social Campaigns', x: 739, y: 298, w: 146, h: 40 },
  { t: 'Marketing', x: 616, y: 381, w: 137, h: 41 }, { t: 'Product Promotion', x: 596, y: 478, w: 170, h: 89, r: 14, pb: 10 },
  { t: 'Public Relations', x: 816, y: 508, w: 138, h: 41 }, { t: 'Television', x: 1017, y: 444, w: 137, h: 41 },
  { t: 'Advertising', x: 1017, y: 508, w: 137, h: 41 }, { t: 'Interviews', x: 1021, y: 575, w: 137, h: 40 },
  { t: 'Offers', x: 616, y: 614, w: 137, h: 41 }, { t: 'Trial', x: 433, y: 711, w: 138, h: 40 },
  { t: 'Introductory Discounts', x: 600, y: 711, w: 182, h: 40 }, { t: 'Coupons', x: 840, y: 711, w: 137, h: 40 },
];
const range = (a: number, b: number) => Array.from({ length: b - a + 1 }, (_, i) => a + i);

export default function App() {
  return (
    <Root>
      <Global />
      <Header>
        <HeaderLeft>
          <Qat>
            <QatSlot $w={16}><SaveIcon /></QatSlot>
            <QatSlot $w={12} />
            <QatSlot $w={16}><Undo2 size={16} color="#f2f2f2" strokeWidth={2.2} /></QatSlot>
            <QatSlot $w={13}><Chev color="#eee" /></QatSlot>
            <QatSlot $w={9} />
            <QatSlot $w={16}><RotateCw size={15} color="#f2f2f2" strokeWidth={2.4} /></QatSlot>
            <QatSlot $w={7} />
            <QatSlot $w={24}><TouchIcon /></QatSlot>
            <QatSlot $w={14}><Chev color="#eee" /></QatSlot>
            <QatSlot $w={7} />
            <QatSlot $w={18}><PreviewIcon /></QatSlot>
            <QatSlot $w={11} />
            <QatSlot $w={8}><CustomizeIcon /></QatSlot>
          </Qat>
          <Tabs>
            {TABS.map(([t, w]) => <Tab key={t} $w={w} $active={t === 'Insert'}>{t}</Tab>)}
          </Tabs>
        </HeaderLeft>
        <Context>
          <ContextTitle>Drawing Tools</ContextTitle>
          <Tab $w={94}>Shape Format</Tab>
        </Context>
        <HeaderRight>
          <TopRow>
            <DocTitle>mind map diagram  -  Word</DocTitle>
            <SignIn>Sign in</SignIn>
            <WinBtn><RibbonOptIcon /></WinBtn>
            <WinBtn><Minus size={14} color="#eee" strokeWidth={1.3} /></WinBtn>
            <WinBtn><RestoreIcon /></WinBtn>
            <WinBtn><X size={17} color="#eee" strokeWidth={1.4} /></WinBtn>
          </TopRow>
          <BottomRow>
            <Lightbulb size={18} color="#eee" strokeWidth={1.4} />
            <TellMe>Tell me what you want to do</TellMe>
            <Share><UserPlusIcon /> Share</Share>
          </BottomRow>
        </HeaderRight>
      </Header>

      <Ribbon>
        <Group $w={141}>
          <GroupBody $pl={7}>
            <BigBtn w={42} icon={<CoverIcon />} lines={['Cover', 'Page']} chev />
            <BigBtn w={42} icon={<BlankIcon />} lines={['Blank', 'Page']} off />
            <BigBtn w={42} icon={<BreakIcon />} lines={['Page', 'Break']} off />
          </GroupBody>
          <GroupLabel>Pages</GroupLabel>
        </Group>
        <Sep />
        <Group $w={56}>
          <GroupBody $center><BigBtn w={42} icon={<TableIcon />} lines={['Table', '']} chev /></GroupBody>
          <GroupLabel>Tables</GroupLabel>
        </Group>
        <Sep />
        <Group $w={256}>
          <GroupBody $pl={8}>
            <BigBtn w={44} icon={<PicturesIcon />} lines={['Pictures', '']} chev />
            <BigBtn w={42} hot icon={<ShapesIcon />} lines={['Shapes', '']} chev />
            <BigBtn w={50} icon={<SmartArtIcon />} lines={['SmartArt', '']} />
            <BigBtn w={43} icon={<ChartIcon />} lines={['Chart', '']} />
            <BigBtn w={60} icon={<ScreenshotIcon />} lines={['Screenshot', '']} chev />
          </GroupBody>
          <GroupLabel />
        </Group>
        <Sep />
        <Group $w={178}>
          <GroupBody $pl={9}>
            <Column $w={107} $top={4} $h={31}>
              <SmallBtn icon={<GetAddIcon />} text="Get Add-ins" />
              <SmallBtn icon={<MyAddIcon />} text="My Add-ins" gap={12} />
            </Column>
            <Big $w={52}>
              <BigIcon><BigGlyph $size={28} $color="#1e1e1e">W</BigGlyph></BigIcon>
              <BigLine>Wikipedia</BigLine>
            </Big>
          </GroupBody>
          <GroupLabel>Add-ins</GroupLabel>
        </Group>
        <Sep />
        <Group $w={57}>
          <GroupBody $center><BigBtn w={50} icon={<VideosIcon />} lines={['Online', 'Videos']} /></GroupBody>
          <GroupLabel>Media</GroupLabel>
        </Group>
        <Sep />
        <Group $w={127}>
          <GroupBody $pl={9}>
            <Column $w={115} $top={0} $h={23}>
              <SmallBtn icon={<LinkIcon />} text="Link" />
              <SmallBtn icon={<BookmarkIcon />} text="Bookmark" />
              <SmallBtn icon={<CrossRefIcon />} text="Cross-reference" off />
            </Column>
          </GroupBody>
          <GroupLabel>Links</GroupLabel>
        </Group>
        <Sep />
        <Group $w={71}>
          <GroupBody $center><BigBtn w={60} icon={<CommentIcon />} lines={['Comment', '']} /></GroupBody>
          <GroupLabel>Comments</GroupLabel>
        </Group>
        <Sep />
        <Group $w={159}>
          <GroupBody $pl={8}>
            <BigBtn w={42} icon={<HFIcon pos="top" />} lines={['Header', '']} chev />
            <BigBtn w={42} icon={<HFIcon pos="bottom" />} lines={['Footer', '']} chev />
            <BigBtn w={58} icon={<PageNumIcon />} lines={['Page', 'Number']} chev />
          </GroupBody>
          <GroupLabel>Header &amp; Footer</GroupLabel>
        </Group>
        <Sep />
        <Group $w={309}>
          <GroupBody $pl={7}>
            <BigBtn w={40} icon={<TextBoxIcon />} lines={['Text', 'Box']} chev />
            <BigBtn w={44} icon={<QuickIcon />} lines={['Quick', 'Parts']} chev />
            <BigBtn w={46} icon={<WordArtIcon />} lines={['WordArt', '']} chev />
            <BigBtn w={46} off icon={<DropCapIcon />} lines={['Drop', 'Cap']} chev />
            <Column $w={120} $top={0} $h={23}>
              <SmallBtn icon={<SigIcon />} text="Signature Line" gap={8} />
              <SmallBtn icon={<DateIcon />} text="Date & Time" off />
              <SmallBtn icon={<ObjectIcon />} text="Object" gap={12} />
            </Column>
          </GroupBody>
          <GroupLabel>Text</GroupLabel>
        </Group>
        <Sep />
        <Group $w={110}>
          <GroupBody $pl={7}>
            <Big $w={50}>
              <BigIcon><BigGlyph $size={40} $color="#7a7a7a" $bold $lift={6}>π</BigGlyph></BigIcon>
              <BigLine>Equation</BigLine>
              <BigLine><Chev /></BigLine>
            </Big>
            <Big $w={44} $off>
              <BigIcon><BigGlyph $size={38} $color="#7a7a7a" $bold>Ω</BigGlyph></BigIcon>
              <BigLine>Symbol</BigLine>
              <BigLine><Chev color="#767676" /></BigLine>
            </Big>
          </GroupBody>
          <GroupLabel>Symbols</GroupLabel>
        </Group>
        <Sep />
        <Collapse><ChevronUp size={15} color="#333" strokeWidth={1.2} /></Collapse>
      </Ribbon>

      <Workspace>
        <LeftPane>
          <TabSelector><div><CornerTab /></div></TabSelector>
          <VRuler>
            {range(-7, 43).map(k => (
              <VCell key={k}>
                {k !== 0 && k % 8 === 0 ? <VNum>{k / 8}</VNum> : k % 4 === 0 && k !== 0 ? <VDash /> : k !== 0 ? <Dot /> : null}
              </VCell>
            ))}
          </VRuler>
        </LeftPane>
        <PageCol>
          <HRuler>
            {range(-7, 59).map(k => (
              <HCell key={k}>
                {k !== 0 && k % 8 === 0 ? <HNum>{k / 8}</HNum> : k % 4 === 0 && k !== 0 ? <HDash /> : k !== 0 ? <Dot /> : null}
              </HCell>
            ))}
            <IndentMark />
          </HRuler>
          <Page>
            {NODES.map(n => <Node key={n.t} $x={n.x} $y={n.y} $w={n.w} $h={n.h} $r={n.r} $pb={n.pb}>{n.t}</Node>)}
            <Connector />
            <Handle $y={240} />
            <Handle $y={268} $yellow />
            <Handle $y={298} />
            <LayoutBtn><LayoutIcon /></LayoutBtn>
          </Page>
        </PageCol>
      </Workspace>

      <Menu>
        {Sections.map(([title, keys, n]) => (
          <React.Fragment key={title}>
            <MenuHead>{title}</MenuHead>
            <GlyphGrid $rows={n}>
              {keys.map((k, i) => <Glyph key={i} k={k} />)}
            </GlyphGrid>
          </React.Fragment>
        ))}
        <MenuFoot>
          <FootIcon><CanvasIcon /></FootIcon>
          <span><u>N</u>ew Drawing Canvas</span>
        </MenuFoot>
      </Menu>
    </Root>
  );
}
